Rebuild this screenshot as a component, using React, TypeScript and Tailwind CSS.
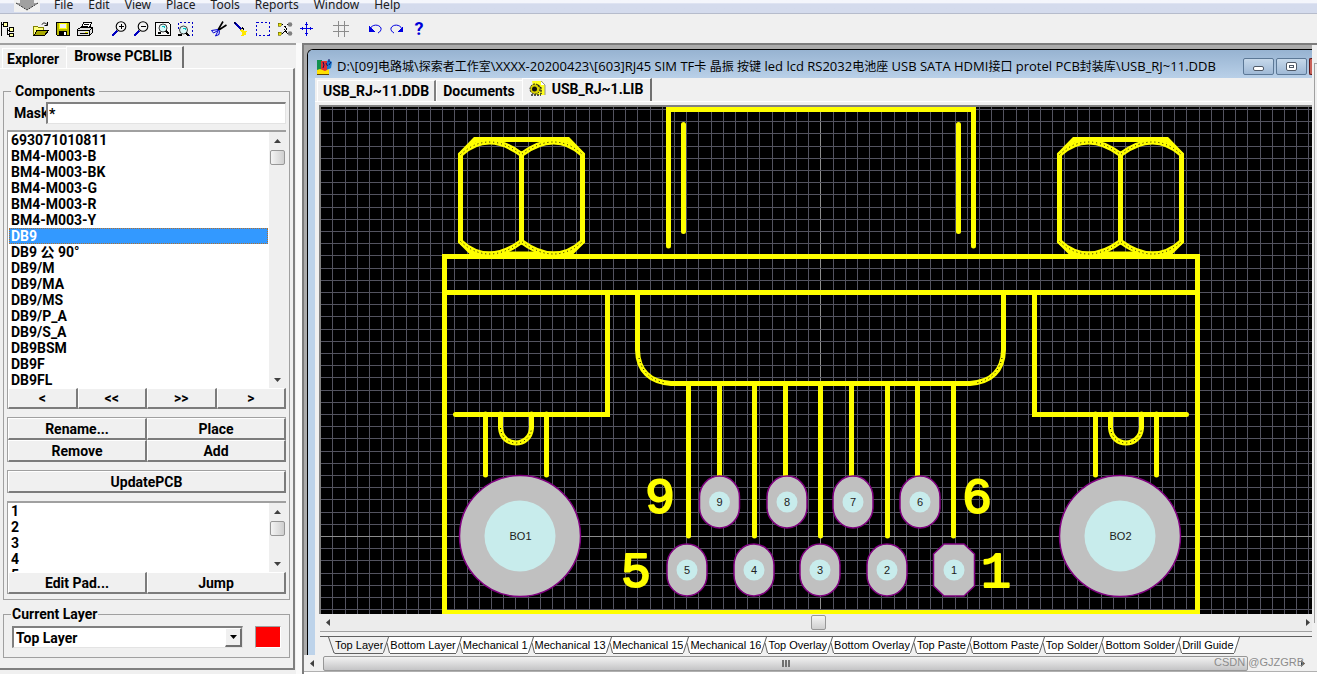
import React from "react";

const menus = ["File", "Edit", "View", "Place", "Tools", "Reports", "Window", "Help"];

const windowTitle =
  "D:\\[09]电路城\\探索者工作室\\XXXX-20200423\\[603]RJ45 SIM TF卡 晶振 按键 led lcd RS2032电池座 USB SATA HDMI接口 protel PCB封装库\\USB_RJ~11.DDB";

const components = [
  "693071010811",
  "BM4-M003-B",
  "BM4-M003-BK",
  "BM4-M003-G",
  "BM4-M003-R",
  "BM4-M003-Y",
  "DB9",
  "DB9 公 90°",
  "DB9/M",
  "DB9/MA",
  "DB9/MS",
  "DB9/P_A",
  "DB9/S_A",
  "DB9BSM",
  "DB9F",
  "DB9FL",
];

const layers = [
  "Top Layer",
  "Bottom Layer",
  "Mechanical 1",
  "Mechanical 13",
  "Mechanical 15",
  "Mechanical 16",
  "Top Overlay",
  "Bottom Overlay",
  "Top Paste",
  "Bottom Paste",
  "Top Solder",
  "Bottom Solder",
  "Drill Guide",
];

function Icon({ children }: { children: React.ReactNode }) {
  return (
    <svg width="16" height="16" viewBox="0 0 16 16" fill="none" shapeRendering="crispEdges" className="shrink-0">
      {children}
    </svg>
  );
}

function Magnifier({ plus }: { plus?: boolean }) {
  return (
    <Icon>
      <path d="M1 15 L6 10" stroke="#0000c0" strokeWidth="2.6" />
      <circle cx="10" cy="5.5" r="4.8" stroke="#000" strokeWidth="1.1" fill="#f4f4f4" shapeRendering="auto" />
      <path d="M7.500 5.500H12.500" stroke="#000" />
      {plus && <path d="M10 3V8" stroke="#000" />}
    </Icon>
  );
}

const toolGroups: { name: string; icon: React.ReactNode }[][] = [
  [
    {
      name: "Open",
      icon: (
        <Icon>
          <path d="M0.500 14V5.500H4.500L5.500 6.500H10.500V9" stroke="#808000" fill="#ffff80" />
          <path d="M1 14.500L4 9.500H15.500L11.500 14.500Z" fill="#a8a800" stroke="#000" />
          <path d="M9 3.500C10 1.500 12 1.500 14 3.500M14.500 1V4.500H11.500" stroke="#000" shapeRendering="auto" />
        </Icon>
      ),
    },
    {
      name: "Save",
      icon: (
        <Icon>
          <path d="M1.500 1.500H14.500V14.500H2.500L1.500 13.500Z" fill="#b8b800" stroke="#000" />
          <path d="M4 2H12V8H4Z" fill="#ffff00" />
          <path d="M5 3H11V7H5Z" fill="#f0f0f0" />
          <path d="M4 10H12V14H4Z" fill="#000" />
          <path d="M9 11H11V14H9Z" fill="#fff" />
        </Icon>
      ),
    },
    {
      name: "Print",
      icon: (
        <Icon>
          <path d="M4.500 7L6.500 1.500H14.500L12.500 7" fill="#fff" stroke="#000" />
          <path d="M7 3.500H12M6 5.500H11" stroke="#000" />
          <path d="M0.500 8.500L3.500 6.500H15.500V11.500L12.500 14.500H0.500Z" fill="#e0e0e0" stroke="#000" />
          <path d="M1 9.500H12.500V14M3 12.500H11M13 9L15 7" stroke="#000" />
          <path d="M8 11H11V12H8Z" fill="#e0e000" />
        </Icon>
      ),
    },
  ],
  [
    { name: "Zoom In", icon: <Magnifier plus /> },
    { name: "Zoom Out", icon: <Magnifier /> },
    {
      name: "Fit Document",
      icon: (
        <Icon>
          <path d="M0.500 1.500H13.500L15.500 3.500V14.500H0.500Z" stroke="#000" fill="#f8f8f8" />
          <circle cx="8" cy="7" r="4" stroke="#404040" fill="#d8f8f8" shapeRendering="auto" />
          <path d="M11 10L14 13M3 12H6" stroke="#000" strokeWidth="1.5" />
          <path d="M7 5H9V7" stroke="#00c0c0" />
        </Icon>
      ),
    },
    {
      name: "Fit Area",
      icon: (
        <Icon>
          <path d="M1.500 8V1.500H15.500V14.500H12" stroke="#0000c0" strokeDasharray="2 2" />
          <circle cx="6.500" cy="9" r="4" stroke="#404040" fill="#d8f8f8" shapeRendering="auto" />
          <path d="M9 12L12 15M1 14H5" stroke="#000" strokeWidth="1.5" />
          <path d="M6 7H8V9" stroke="#00c0c0" />
        </Icon>
      ),
    },
  ],
  [
    {
      name: "Cut",
      icon: (
        <Icon>
          <path d="M15.500 4L7 9.500M12 0.500L7 9" stroke="#000" strokeWidth="1.600" shapeRendering="auto" />
          <path d="M7 8.500L0.500 9.500L2.500 12L7 9.500M7.500 9L4.500 15L8 13.500L8.500 9.500" stroke="#0000d0" fill="#e8e8ff" shapeRendering="auto" />
        </Icon>
      ),
    },
    {
      name: "Place Track",
      icon: (
        <Icon>
          <path d="M2 2L9 9" stroke="#0000b0" strokeWidth="2.5" />
          <path d="M1 1L3 3M9 6L11 9" stroke="#000" />
          <path d="M8 9L13 14M13 10L9 15M10 9V15" stroke="#ffe800" strokeWidth="2" />
        </Icon>
      ),
    },
    {
      name: "Select Area",
      icon: (
        <Icon>
          <path d="M1.500 1.500H15M14.500 1V15M14 14.500H1M1.500 14V1" stroke="#0000d0" strokeDasharray="2 2" />
        </Icon>
      ),
    },
    {
      name: "Deselect",
      icon: (
        <Icon>
          <path d="M5 3L10 8L5 13M11 3L7 8L11 13" stroke="#000" strokeDasharray="2 1" />
          <path d="M1 2H4V5H1ZM1 11H4V14H1Z" fill="#e8e000" stroke="#606000" strokeWidth="0.600" />
          <circle cx="13" cy="3.500" r="2.300" fill="#808080" shapeRendering="auto" />
          <circle cx="13" cy="12.500" r="2.300" fill="#808080" shapeRendering="auto" />
        </Icon>
      ),
    },
    {
      name: "Move",
      icon: (
        <Icon>
          <path d="M7.500 1V15M1 7.500H14" stroke="#0000e0" />
          <path d="M6 3.500H9M6 12.500H9M3.500 6V9M11.500 6V9M7 2.500H8M2.500 7V8" stroke="#0000e0" />
        </Icon>
      ),
    },
  ],
  [
    {
      name: "Grid",
      icon: (
        <Icon>
          <path d="M5.500 0V16M11.500 0V16M0 4.500H16M0 10.500H16" stroke="#8c8c8c" />
        </Icon>
      ),
    },
  ],
  [
    {
      name: "Undo",
      icon: (
        <Icon>
          <path d="M3 8C5 3 12 3 14 7C14.500 9 13 11 11 12" stroke="#0000e0" shapeRendering="auto" />
          <path d="M2 5V11H8Z" fill="#0000e0" />
        </Icon>
      ),
    },
    {
      name: "Redo",
      icon: (
        <Icon>
          <path d="M13 8C11 3 4 3 2 7C1.500 9 3 11 5 12" stroke="#0000e0" shapeRendering="auto" />
          <path d="M14 5V11H8Z" fill="#0000e0" />
        </Icon>
      ),
    },
    {
      name: "Help",
      icon: <span className="text-[18px] leading-[18px] font-bold text-[#0000d8]">?</span>,
    },
  ],
];

function Triangle({ dir }: { dir: "up" | "down" | "left" | "right" }) {
  const d = {
    up: "M1 6L4.500 2L8 6Z",
    down: "M1 3L4.500 7L8 3Z",
    left: "M6 1L2 4.500L6 8Z",
    right: "M3 1L7 4.500L3 8Z",
  }[dir];
  return (
    <svg width="9" height="9" viewBox="0 0 9 9" className="shrink-0">
      <path d={d} fill="#404040" />
    </svg>
  );
}

function VScroll() {
  return (
    <div className="flex w-[17px] shrink-0 flex-col items-center bg-[#efefef] pr-px">
      <div className="flex h-[18px] items-center">
        <Triangle dir="up" />
      </div>
      <div className="h-[15px] w-[15px] rounded-xs border border-[#979797] bg-linear-to-r from-[#f4f4f4] to-[#cfcfcf]" />
      <div className="flex-1" />
      <div className="flex h-[18px] items-center">
        <Triangle dir="down" />
      </div>
    </div>
  );
}

function Push({ children }: { children: React.ReactNode }) {
  return (
    <button className="flex-1 border-t border-r-2 border-b-2 border-l border-t-white border-r-[#7c7c7c] border-b-[#7c7c7c] border-l-white bg-[#f0f0f0] text-center leading-[16px]">
      {children}
    </button>
  );
}

const period = 12.2;
const columns = Array.from({ length: 82 }, (_, i) => Math.ceil(820 + (i - 41) * period - 0.01));
const rows = Array.from({ length: 43 }, (_, i) => Math.round(536 + (i - 36) * period - 0.1));

const hexNut =
  "M460.500 154.500L475 139.500H568L582.500 154.500V241.500L570 254H473L460.500 241.500ZM521.500 154V242";
const hexArcs =
  "M460.500 154.500Q488 129.500 521.500 154.500Q555 129.500 582.500 154.500M460.500 241.500Q488 266.500 521.500 241.500Q555 266.500 582.500 241.500";

const pads = [
  { n: "9", x: 719.5, y: 502 },
  { n: "8", x: 787, y: 502 },
  { n: "7", x: 853, y: 502 },
  { n: "6", x: 920, y: 502 },
  { n: "5", x: 687, y: 570 },
  { n: "4", x: 754, y: 570 },
  { n: "3", x: 820, y: 570 },
  { n: "2", x: 887, y: 570 },
];

function Footprint() {
  return (
    <svg width="100%" height="100%" className="block bg-black font-normal" role="img" aria-label="DB9 footprint">
      <g transform="translate(-321 -107)">
        <g shapeRendering="crispEdges">
          {columns.map((x) => (
            <rect key={x} x={x} y="107" width="1" height="520" fill={x === 820 ? "#8c8c8c" : "#53535f"} />
          ))}
          {rows.map((y) => (
            <rect key={y} x="321" y={y} width="1000" height="1" fill={y === 536 ? "#8c8c8c" : "#53535f"} />
          ))}
        </g>
        <g stroke="#ffff00" strokeWidth="5" fill="none" strokeLinecap="round" strokeLinejoin="miter">
          <path d="M668.500 246V109.500H973.500V246M683.500 124.500V231.500M958.500 124.500V231.500" />
          <path d="M444.500 612.500V256.500H1197.500V612.500ZM444.500 292.500H1197.500" />
          <path d="M607.500 292.500V414.500H455.500M1034.500 292.500V414.500H1186.500" />
          <path d="M637.500 292.500V350C638 371 650 382 671 383.500H970C991 382 1003 371 1003.500 350V292.500" />
          <path d="M688.500 384V536M754.500 384V536M820.500 384V536M887.500 384V536M953.500 384V536" />
          <path d="M719.500 384V480M785.500 384V480M851.500 384V480M917.500 384V480" />
          <path d="M485.500 414V475M546.500 414V475M1095.500 414V475M1156.500 414V475" />
          <path d="M500.500 414V428C502 448 530 448 531.500 428V414M1110.500 414V428C1112 448 1140 448 1141.500 428V414" />
          <path d={hexNut} />
          <path d={hexArcs} />
          <g transform="translate(599 0)">
            <path d={hexNut} />
            <path d={hexArcs} />
          </g>
        </g>
        <g stroke="#000" strokeWidth="1" strokeDasharray="1 3" fill="none">
          <path d={hexArcs} />
          <path d={hexArcs} transform="translate(599 0)" />
          <path d="M500.500 428C502 448 530 448 531.500 428M1110.500 428C1112 448 1140 448 1141.500 428" />
          <path d="M639 358C642 372 651 380 665 383M1002 358C999 372 990 380 976 383" />
        </g>
        <g stroke="#800080" strokeWidth="1.500" fill="#c0c0c0">
          <circle cx="520" cy="536" r="60.500" />
          <circle cx="1120" cy="536" r="60.500" />
          {pads.map((p) => (
            <rect key={p.n} x={p.x - 20} y={p.y - 26} width="40" height="52" rx="20" ry="21" />
          ))}
          <path d="M944 544H964L974.500 554V586L964 596H944L933.500 586V554Z" />
        </g>
        <g fill="#c8ecec">
          <circle cx="520" cy="536" r="35.500" />
          <circle cx="1120" cy="536" r="35.500" />
          {pads.map((p) => (
            <circle key={p.n} cx={p.x} cy={p.y} r="10.500" />
          ))}
          <circle cx="954" cy="570" r="10.500" />
        </g>
        <g className="font-['Liberation_Sans'] text-[11px]" fill="#202020" textAnchor="middle">
          <text x="520.500" y="540">BO1</text>
          <text x="1120.500" y="540">BO2</text>
          {pads.map((p) => (
            <text key={p.n} x={p.x} y={p.y + 4}>
              {p.n}
            </text>
          ))}
          <text x="954" y="574">1</text>
        </g>
        <g
          className="font-['Liberation_Mono'] text-[50px]"
          fill="#ffff00"
          stroke="#ffff00"
          strokeWidth="2"
          strokeLinejoin="round"
          textAnchor="middle"
        >
          <text x="660" y="513">9</text>
          <text x="636" y="587">5</text>
          <text x="977" y="513">6</text>
          <text x="996" y="587">1</text>
        </g>
      </g>
    </svg>
  );
}

function TabEdge({ first, last, active }: { first?: boolean; last?: boolean; active?: boolean }) {
  return (
    <svg width="7" height="17" viewBox="0 0 7 17" className="shrink-0" fill="none">
      {!first && <path d="M0 16L5 0H0Z" fill={active ? "#f0f0f0" : "#fff"} />}
      {!last && !first && <path d="M7 16L3 4L4.500 0H7Z" fill="#fff" />}
      {first && <path d="M0.500 0L6 16H7" stroke="#606060" />}
      {!first && !last && <path d="M4 6L6.500 16" stroke="#606060" />}
      {!first && <path d="M0 15.500H0.500L5.500 0" stroke="#606060" />}
    </svg>
  );
}

export default function App() {
  return (
    <div className="flex h-screen flex-col overflow-hidden bg-[#f0f0f0] font-[Roboto,'Noto_Sans_CJK_SC',sans-serif] text-[14px] font-bold text-black">
      <header className="shrink-0">
        <nav className="flex h-[14px] items-center border-b border-[#b6bccc] bg-linear-to-b from-[#f4f6fc] from-20% to-[#d4dbed] to-30% pb-[3px] pl-[14px] font-['Noto_Sans',sans-serif] text-[12px] font-normal text-[#202020]">
          <svg width="26" height="14" viewBox="0 0 26 14" className="mr-[9px] shrink-0">
            <path d="M0 0H26V14H0Z" fill="#f0f0f0" />
            <path d="M6 0H20V5H24L13 12L2 5H6Z" fill="#a0a0a0" />
            <path d="M24 5L13 12L2 5" stroke="#303030" fill="none" strokeDasharray="2 1" />
          </svg>
          {menus.map((m) => (
            <button key={m} className="mr-[14px] ml-[1px] leading-[14px] last:mr-0 first-of-type:ml-[5px]">
              {m}
            </button>
          ))}
        </nav>
        <div className="flex h-[29px] items-center gap-3" role="toolbar">
          <button aria-label="Browser" className="flex w-[18px] justify-end overflow-hidden pr-[3px]">
            <Icon>
              <path d="M2.500 1V15M2.500 3.500H6M8.500 7V13.500H11M8.500 9H11" stroke="#000" />
              <path d="M4.500 1.500H8.500V5.500H4.500ZM10.500 6.500H14.500V10.500H10.500ZM10.500 12.500H14.500V15.500H10.500Z" stroke="#000" fill="#ffffa0" />
            </Icon>
          </button>
          {toolGroups.map((group) => (
            <div key={group[0].name} className="flex">
              {group.map((t) => (
                <button key={t.name} aria-label={t.name} className="flex h-6 w-[22px] items-center justify-center">
                  {t.icon}
                </button>
              ))}
            </div>
          ))}
        </div>
      </header>

      <main className="flex min-h-0 flex-1">
        <aside className="flex w-[296px] shrink-0 flex-col border-t-2 border-[#a0a0a0] pr-px">
          <div className="flex h-[23px] shrink-0 items-end pl-[2px]" role="tablist">
            <button role="tab" className="h-5 border-t border-l border-white pr-[7px] pl-1 leading-[20px]">
              Explorer
            </button>
            <button
              role="tab"
              aria-selected="true"
              className="h-[22px] border-t border-r-2 border-l border-t-white border-r-[#707070] border-l-white pr-[10px] pb-[2px] pl-[7px] leading-[17px]"
            >
              Browse PCBLIB
            </button>
          </div>
          <div className="mb-1 flex flex-1 flex-col border-t border-r-2 border-b-2 border-t-white border-r-[#808080] border-b-[#808080] px-[3px] pt-[13px]">
            <fieldset className="border border-[#a0a0a0] px-[3px] pb-[5px]">
              <legend className="ml-1 px-1 leading-[18px]">Components</legend>
              <div className="mt-[2px] flex h-[22px] items-center">
                <label htmlFor="mask" className="w-[39px] overflow-hidden pl-[7px] whitespace-nowrap">
                  Mask
                </label>
                <input
                  id="mask"
                  defaultValue="*"
                  className="h-full w-0 flex-1 border-t-2 border-r border-b border-l-2 border-t-[#808080] border-r-[#e3e3e3] border-b-[#e3e3e3] border-l-[#808080] bg-white pl-px outline-none"
                />
              </div>
              <div className="mt-[6px] flex h-[258px] border-t-2 border-l border-[#a0a0a0] bg-white">
                <ul className="flex-1 pr-px pl-px" role="listbox" aria-label="Components">
                  {components.map((c) => (
                    <li
                      key={c}
                      role="option"
                      aria-selected={c === "DB9"}
                      className={
                        c === "DB9"
                          ? "h-4 bg-[#3399ff] pl-[2px] leading-[16px] text-white outline-1 -outline-offset-1 outline-dotted outline-[#b07030]"
                          : "h-4 pl-[2px] leading-[16px]"
                      }
                    >
                      {c}
                    </li>
                  ))}
                </ul>
                <VScroll />
              </div>
              <div className="flex h-[21px] border-l border-[#a0a0a0]">
                {["<", "<<", ">>", ">"].map((s) => (
                  <Push key={s}>{s}</Push>
                ))}
              </div>
              <div className="mt-2 flex h-[23px] border-t border-l border-[#a0a0a0]">
                <Push>Rename...</Push>
                <Push>Place</Push>
              </div>
              <div className="flex h-[22px] border-l border-[#a0a0a0]">
                <Push>Remove</Push>
                <Push>Add</Push>
              </div>
              <div className="mt-2 flex h-[23px] border-t border-l border-[#a0a0a0]">
                <Push>UpdatePCB</Push>
              </div>
              <div className="mt-2 flex h-[71px] overflow-hidden border-t-2 border-l border-[#a0a0a0] bg-white">
                <ul className="flex-1 pl-[3px] leading-[16px]" role="listbox" aria-label="Pads">
                  {["1", "2", "3", "4", "5"].map((n) => (
                    <li key={n} role="option" aria-selected="false">
                      {n}
                    </li>
                  ))}
                </ul>
                <VScroll />
              </div>
              <div className="flex h-[22px] border-l border-[#a0a0a0]">
                <Push>Edit Pad...</Push>
                <Push>Jump</Push>
              </div>
            </fieldset>
            <fieldset className="mt-[5px] border border-[#a0a0a0] pr-2 pb-[9px] pl-2">
              <legend className="-ml-px px-px leading-[18px]">Current Layer</legend>
              <div className="flex w-full items-start gap-3 pt-[3px]">
                <div className="relative flex-1">
                  <select
                    aria-label="Current layer"
                    className="block h-[22px] w-full appearance-none border-t-2 border-r border-b border-l-2 border-t-[#808080] border-r-[#e3e3e3] border-b-[#e3e3e3] border-l-[#808080] bg-white pl-[2px] leading-[18px] outline-none"
                  >
                    <option>Top Layer</option>
                  </select>
                  <span className="pointer-events-none absolute top-[2px] right-px bottom-px flex w-[17px] items-center justify-center border-t border-r-2 border-b-2 border-l border-t-white border-r-[#707070] border-b-[#707070] border-l-white bg-[#f0f0f0]">
                    <svg width="7" height="4" viewBox="0 0 7 4">
                      <path d="M0 0H7L3.500 4Z" fill="#000" />
                    </svg>
                  </span>
                </div>
                <div className="h-[22px] w-[26px] border border-t-[#a0a0a0] border-r-white border-b-white border-l-[#a0a0a0] bg-[#ff0000]" />
              </div>
            </fieldset>
          </div>
        </aside>

        <div className="w-[6px] shrink-0 bg-[#fafafa]" />

        <section className="flex min-w-0 flex-1 flex-col border-t-2 border-l-2 border-[#7c7c7c]">
          <div className="flex min-h-0 flex-1">
            <div className="flex min-w-0 flex-1 flex-col bg-[#ababab] pt-1 pl-[3px]">
              <div className="flex min-h-0 flex-1 flex-col overflow-hidden rounded-tl-md border-t border-l border-black bg-[#bdd3ea]">
                <div className="flex h-7 shrink-0 items-center bg-linear-to-b from-[#97b3d1] to-[#b9d0e8] pt-[5px] pl-[9px] font-['Open_Sans','Noto_Sans_CJK_SC',sans-serif] text-[13px] leading-[18px] font-normal">
                  <svg width="16" height="16" viewBox="0 0 16 16" className="mr-1 shrink-0">
                    <path d="M0 1H5V11H0Z" fill="#109050" />
                    <path d="M4 2H10V12H4Z" fill="#e03030" />
                    <path d="M10 2L12 1L15 3L14 9L10 11Z" fill="#1878d0" />
                    <path d="M6 3L7 6L6 9M9 4L10.500 7M12 0V3M14 3L12 6" stroke="#101060" fill="none" />
                    <path d="M0 11L3 10L8 12L12 10V15H0Z" fill="#ffe000" />
                    <path d="M0 15.500H12" stroke="#604000" />
                  </svg>
                  <h1 className="flex-1 overflow-hidden whitespace-nowrap">
                    {windowTitle.split(/([\u4e00-\u9fff]+)/).map((part, i) => (
                      <span key={i} className={i % 2 ? "text-[12px]" : ""}>
                        {part}
                      </span>
                    ))}
                  </h1>
                  <div className="flex shrink-0 gap-[2px]">
                    <button aria-label="Minimize" className="flex h-[17px] w-[31px] items-center justify-center rounded-xs border border-[#5c7896] bg-linear-to-b from-[#c6d8ea] to-[#9fb9d6]">
                      <span className="mt-1 h-[5px] w-[11px] rounded-xs border border-[#505a68] bg-white" />
                    </button>
                    <button aria-label="Maximize" className="flex h-[17px] w-[31px] items-center justify-center rounded-xs border border-[#5c7896] bg-linear-to-b from-[#c6d8ea] to-[#9fb9d6]">
                      <span className="flex h-[9px] w-[11px] items-center justify-center rounded-xs border border-[#505a68] bg-white">
                        <span className="h-[3px] w-[5px] border border-[#505a68]" />
                      </span>
                    </button>
                    <button aria-label="Close" className="h-[17px] w-[3px] rounded-l-xs border-y border-l border-[#601818] bg-[#c86058]" />
                  </div>
                </div>

                <div className="ml-[7px] flex min-h-0 flex-1 flex-col bg-[#f0f0f0]">
                  <div className="flex h-6 shrink-0 items-end border-b border-white pl-[2px]" role="tablist">
                    <button role="tab" className="h-[21px] border-t border-r-2 border-l border-t-white border-r-[#808080] border-l-white px-[5px] leading-[20px]">
                      USB_RJ~11.DDB
                    </button>
                    <button role="tab" className="h-[21px] border-t border-l border-white pr-[7px] pl-[6px] leading-[20px]">
                      Documents
                    </button>
                    <button role="tab" aria-selected="true" className="flex h-[23px] items-center gap-[6px] border-t border-r-2 border-l border-t-white border-r-[#707070] border-l-white pr-[7px] pb-[2px] pl-[6px] leading-[20px]">
                      <svg width="17" height="16" viewBox="0 0 17 16" className="shrink-0">
                        <path d="M3 0H13L16 4V14H6Z" fill="#ffff20" />
                        <path d="M12 0L16 4H12Z" fill="#fff" />
                        <path d="M12 0L16 4V14" stroke="#909090" fill="none" />
                        <circle cx="6" cy="8" r="5" fill="#d8d000" stroke="#202020" strokeDasharray="2 1" />
                        <circle cx="5.500" cy="8" r="2.500" fill="#101010" />
                        <path d="M9 4L12 7V13M2 14H12" stroke="#202020" strokeWidth="1.500" strokeDasharray="2 1" fill="none" />
                      </svg>
                      USB_RJ~1.LIB
                    </button>
                  </div>
                  <div className="mt-[3px] ml-1 min-h-0 flex-1 border-t-2 border-l-2 border-[#808080]">
                    <Footprint />
                  </div>
                  <div className="ml-[5px] flex h-[18px] shrink-0 items-center border-b border-[#a0a0a0] bg-[#ececec] pl-1">
                    <Triangle dir="left" />
                    <div className="flex flex-1 justify-center">
                      <div className="h-[15px] w-[15px] rounded-xs border border-[#979797] bg-linear-to-b from-[#f4f4f4] to-[#cfcfcf]" />
                    </div>
                    <Triangle dir="right" />
                  </div>
                  <div className="mt-1 ml-[5px] flex h-[18px] shrink-0 overflow-hidden border-t border-[#606060] pl-2 font-['Liberation_Sans',sans-serif] text-[11px] font-normal" role="tablist">
                    {layers.map((l, i) => (
                      <React.Fragment key={l}>
                        {i === 0 && <TabEdge first />}
                        <button
                          role="tab"
                          className={
                            i === 0
                              ? "border-b border-[#606060] bg-[#f0f0f0] leading-[16px] whitespace-nowrap"
                              : "border-b border-[#606060] bg-white leading-[16px] whitespace-nowrap"
                          }
                        >
                          {l}
                        </button>
                        <TabEdge active={i === 0} last={i === layers.length - 1} />
                      </React.Fragment>
                    ))}
                  </div>
                  <div className="h-px shrink-0" />
                </div>
              </div>
            </div>
            <div className="w-[5px] shrink-0 pt-[18px] pl-[2px]">
              <div className="h-[560px] border-t border-l border-[#a0a0a0]" />
            </div>
          </div>
          <div className="relative flex h-4 shrink-0 items-center bg-[#f0f0f0] pr-[10px] pl-1">
            <Triangle dir="left" />
            <div className="ml-[6px] flex h-[15px] flex-1 items-center justify-center gap-px rounded-xs border border-[#979797] bg-linear-to-b from-[#f2f2f2] to-[#c4c4c6]">
              <span className="h-[7px] w-[2px] bg-[#707070]" />
              <span className="h-[7px] w-[2px] bg-[#707070]" />
              <span className="h-[7px] w-[2px] bg-[#707070]" />
            </div>
            <div className="w-[50px]" />
            <Triangle dir="right" />
            <span className="absolute top-0 right-[13px] font-['Liberation_Sans',sans-serif] text-[11px] leading-[14px] font-normal text-[#8c8c8c]">
              CSDN @GJZGRB
            </span>
          </div>
          <div className="h-[3px] shrink-0 border-t border-[#b0b0b0] bg-white" />
        </section>
      </main>
    </div>
  );
}
